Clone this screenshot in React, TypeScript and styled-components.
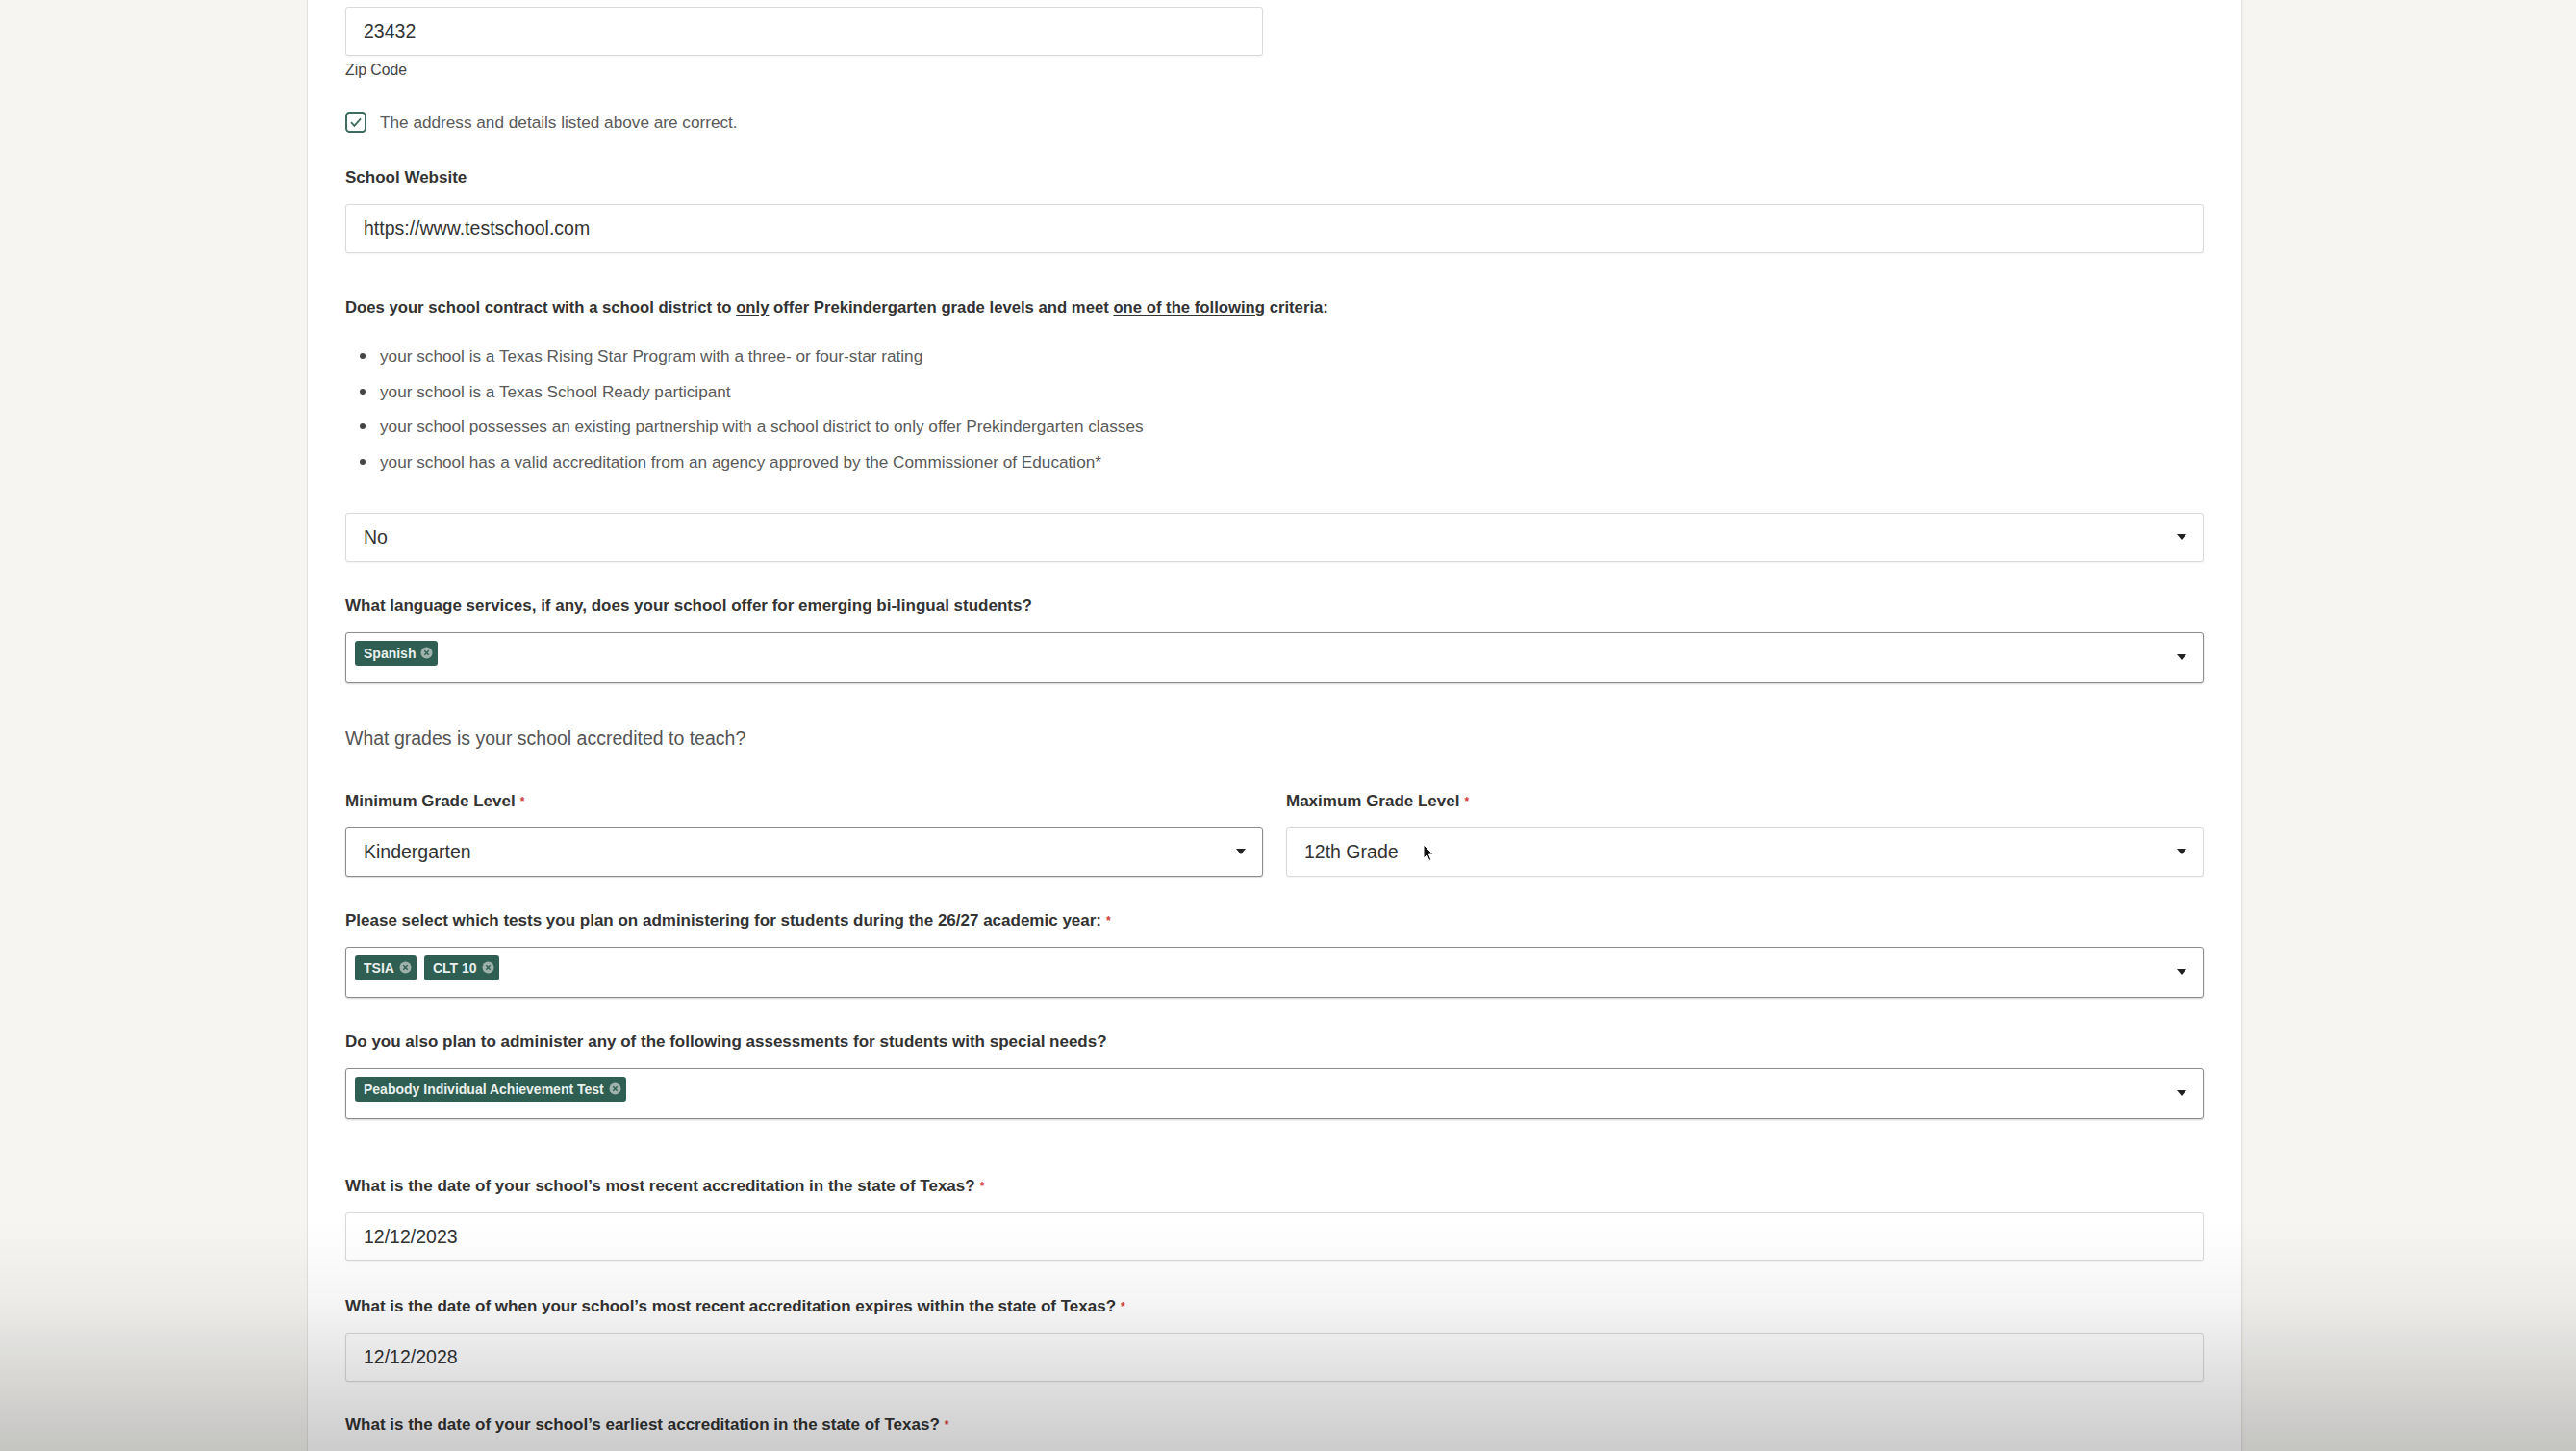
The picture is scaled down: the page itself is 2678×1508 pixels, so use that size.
import React from "react";
import styled, { createGlobalStyle } from "styled-components";

const GlobalStyle = createGlobalStyle`
  html, body {
    margin: 0;
    padding: 0;
    background: #f6f5f2;
    font-family: "Liberation Sans", Arial, sans-serif;
    overflow: hidden;
  }
  * { box-sizing: border-box; }
`;

const Page = styled.div`
  height: 1508px;
  padding-left: 320px;
  overflow: hidden;
`;

const Panel = styled.div`
  width: 2010px;
  min-height: 1508px;
  background: #ffffff;
  padding: 7px 39px 40px;
  box-shadow: 0 0 0 1px #e4e3e0, 1px 0 3px rgba(0, 0, 0, 0.08);
  display: flex;
  flex-direction: column;
`;

const Field = styled.div<{ $mt?: number }>`
  display: flex;
  flex-direction: column;
  gap: 17px;
  margin-top: ${(p) => p.$mt ?? 0}px;
`;

const TwoCol = styled.div<{ $mt?: number }>`
  display: grid;
  grid-template-columns: 1fr 1fr;
  column-gap: 24px;
  margin-top: ${(p) => p.$mt ?? 0}px;
`;

const Label = styled.label`
  font-size: 17px;
  line-height: 20px;
  font-weight: 700;
  color: #333;
`;

const Required = styled.span`
  color: #d33a3a;
  font-size: 12px;
  margin-left: 5px;
  vertical-align: top;
`;

const Box = styled.div<{ $strong?: boolean; $multi?: boolean; $mt?: number }>`
  position: relative;
  height: ${(p) => (p.$multi ? 53 : 51)}px;
  margin-top: ${(p) => p.$mt ?? 0}px;
  border: ${(p) => (p.$strong ? "1.5px solid #8c8c8c" : "1px solid #dadada")};
  border-radius: 3px;
  background: #fff;
  box-shadow: ${(p) =>
    p.$strong ? "0 1px 2px rgba(0,0,0,0.18)" : "0 1px 2px rgba(0,0,0,0.05)"};
  display: flex;
  align-items: ${(p) => (p.$multi ? "flex-start" : "center")};
  padding: ${(p) => (p.$multi ? "8px 9px" : "0 18px")};
  font-size: 19.5px;
  color: #333;
`;

const Caret = styled.span`
  position: absolute;
  right: 17px;
  top: 50%;
  margin-top: -3px;
  width: 0;
  height: 0;
  border-left: 5px solid transparent;
  border-right: 5px solid transparent;
  border-top: 6px solid #222;
`;

const ChipList = styled.div`
  display: flex;
  gap: 8px;
`;

const Chip = styled.span`
  display: inline-flex;
  align-items: center;
  gap: 5px;
  height: 26px;
  padding: 0 5px 0 9px;
  border-radius: 3px;
  background: #2f5f52;
  color: #e9f0ed;
  font-size: 14px;
  font-weight: 700;
`;

const HelpText = styled.div`
  margin-top: 6px;
  font-size: 15.8px;
  line-height: 18px;
  color: #444;
`;

const CheckRow = styled.div<{ $mt?: number }>`
  display: flex;
  align-items: center;
  gap: 14px;
  height: 22px;
  margin-top: ${(p) => p.$mt ?? 0}px;
  font-size: 17.2px;
  color: #5a5a5a;
`;

const Question = styled.p<{ $mt?: number }>`
  margin: ${(p) => p.$mt ?? 0}px 0 0;
  font-size: 16.7px;
  line-height: 20px;
  font-weight: 700;
  color: #333;
`;

const Underline = styled.span`
  text-decoration: underline;
  text-underline-offset: 2px;
`;

const CriteriaList = styled.ul`
  margin: 30px 0 0;
  padding-left: 15px;
  list-style: none;
`;

const CriteriaItem = styled.li`
  display: flex;
  align-items: center;
  font-size: 17.2px;
  line-height: 20px;
  color: #5a5a5a;
  margin-bottom: 16.5px;
  &:last-child { margin-bottom: 0; }
  &::before {
    content: "";
    flex: 0 0 6px;
    height: 6px;
    margin-right: 15px;
    border-radius: 50%;
    background: #444;
  }
`;

const SubHeading = styled.div<{ $mt?: number }>`
  margin-top: ${(p) => p.$mt ?? 0}px;
  font-size: 19.5px;
  line-height: 24px;
  color: #555;
`;

const Vignette = styled.div`
  position: fixed;
  left: 0;
  right: 0;
  bottom: 0;
  height: 240px;
  pointer-events: none;
  background: linear-gradient(
    to bottom,
    rgba(0, 0, 0, 0) 0%,
    rgba(0, 0, 0, 0.04) 35%,
    rgba(0, 0, 0, 0.2) 100%
  );
`;

const Pointer = styled.svg`
  position: fixed;
  left: 1479px;
  top: 877px;
  pointer-events: none;
`;

const ChipRemove = () => (
  <svg width="13" height="13" viewBox="0 0 13 13">
    <circle cx="6.5" cy="6.5" r="6" fill="#9fb1ab" />
    <path d="M4.3 4.3 L8.7 8.7 M8.7 4.3 L4.3 8.7" stroke="#2f5f52" strokeWidth="1.4" />
  </svg>
);

const CheckIcon = () => (
  <svg width="22" height="22" viewBox="0 0 22 22">
    <rect x="1" y="1" width="20" height="20" rx="3.5" fill="#fff" stroke="#3e6b5f" strokeWidth="2" />
    <path d="M6 11.2 L9.4 14.8 L16 7.4" fill="none" stroke="#3e6b5f" strokeWidth="1.8" />
  </svg>
);

const MultiSelect = ({ items, mt }: { items: string[]; mt?: number }) => (
  <Box $strong $multi $mt={mt}>
    <ChipList>
      {items.map((item) => (
        <Chip key={item}>
          {item}
          <ChipRemove />
        </Chip>
      ))}
    </ChipList>
    <Caret />
  </Box>
);

const criteria = [
  "your school is a Texas Rising Star Program with a three- or four-star rating",
  "your school is a Texas School Ready participant",
  "your school possesses an existing partnership with a school district to only offer Prekindergarten classes",
  "your school has a valid accreditation from an agency approved by the Commissioner of Education*",
];

export default function App() {
  return (
    <>
      <GlobalStyle />
      <Page>
        <Panel>
          <TwoCol>
            <div>
              <Box>23432</Box>
              <HelpText>Zip Code</HelpText>
            </div>
          </TwoCol>

          <CheckRow $mt={34}>
            <CheckIcon />
            The address and details listed above are correct.
          </CheckRow>

          <Field $mt={37}>
            <Label>School Website</Label>
            <Box>https://www.testschool.com</Box>
          </Field>

          <Question $mt={47}>
            Does your school contract with a school district to <Underline>only</Underline> offer
            Prekindergarten grade levels and meet <Underline>one of the following</Underline> criteria:
          </Question>
          <CriteriaList>
            {criteria.map((c) => (
              <CriteriaItem key={c}>{c}</CriteriaItem>
            ))}
          </CriteriaList>

          <Box $mt={43}>
            No
            <Caret />
          </Box>

          <Field $mt={36}>
            <Label>What language services, if any, does your school offer for emerging bi-lingual students?</Label>
            <MultiSelect items={["Spanish"]} />
          </Field>

          <SubHeading $mt={45}>What grades is your school accredited to teach?</SubHeading>

          <TwoCol $mt={44}>
            <Field>
              <Label>
                Minimum Grade Level<Required>*</Required>
              </Label>
              <Box $strong>
                Kindergarten
                <Caret />
              </Box>
            </Field>
            <Field>
              <Label>
                Maximum Grade Level<Required>*</Required>
              </Label>
              <Box>
                12th Grade
                <Caret />
              </Box>
            </Field>
          </TwoCol>

          <Field $mt={36}>
            <Label>
              Please select which tests you plan on administering for students during the 26/27 academic year:
              <Required>*</Required>
            </Label>
            <MultiSelect items={["TSIA", "CLT 10"]} />
          </Field>

          <Field $mt={36}>
            <Label>Do you also plan to administer any of the following assessments for students with special needs?</Label>
            <MultiSelect items={["Peabody Individual Achievement Test"]} />
          </Field>

          <Field $mt={60}>
            <Label>
              What is the date of your school’s most recent accreditation in the state of Texas?
              <Required>*</Required>
            </Label>
            <Box>12/12/2023</Box>
          </Field>

          <Field $mt={37}>
            <Label>
              What is the date of when your school’s most recent accreditation expires within the state of Texas?
              <Required>*</Required>
            </Label>
            <Box>12/12/2028</Box>
          </Field>

          <Field $mt={35}>
            <Label>
              What is the date of your school’s earliest accreditation in the state of Texas?
              <Required>*</Required>
            </Label>
          </Field>
        </Panel>
      </Page>
      <Vignette />
      <Pointer width="12" height="19" viewBox="0 0 12 19">
        <path d="M1 1 L1 15 L4.4 11.8 L6.8 17.4 L8.8 16.5 L6.5 11 L11 11 Z" fill="#111" stroke="#fff" strokeWidth="1" />
      </Pointer>
    </>
  );
}
